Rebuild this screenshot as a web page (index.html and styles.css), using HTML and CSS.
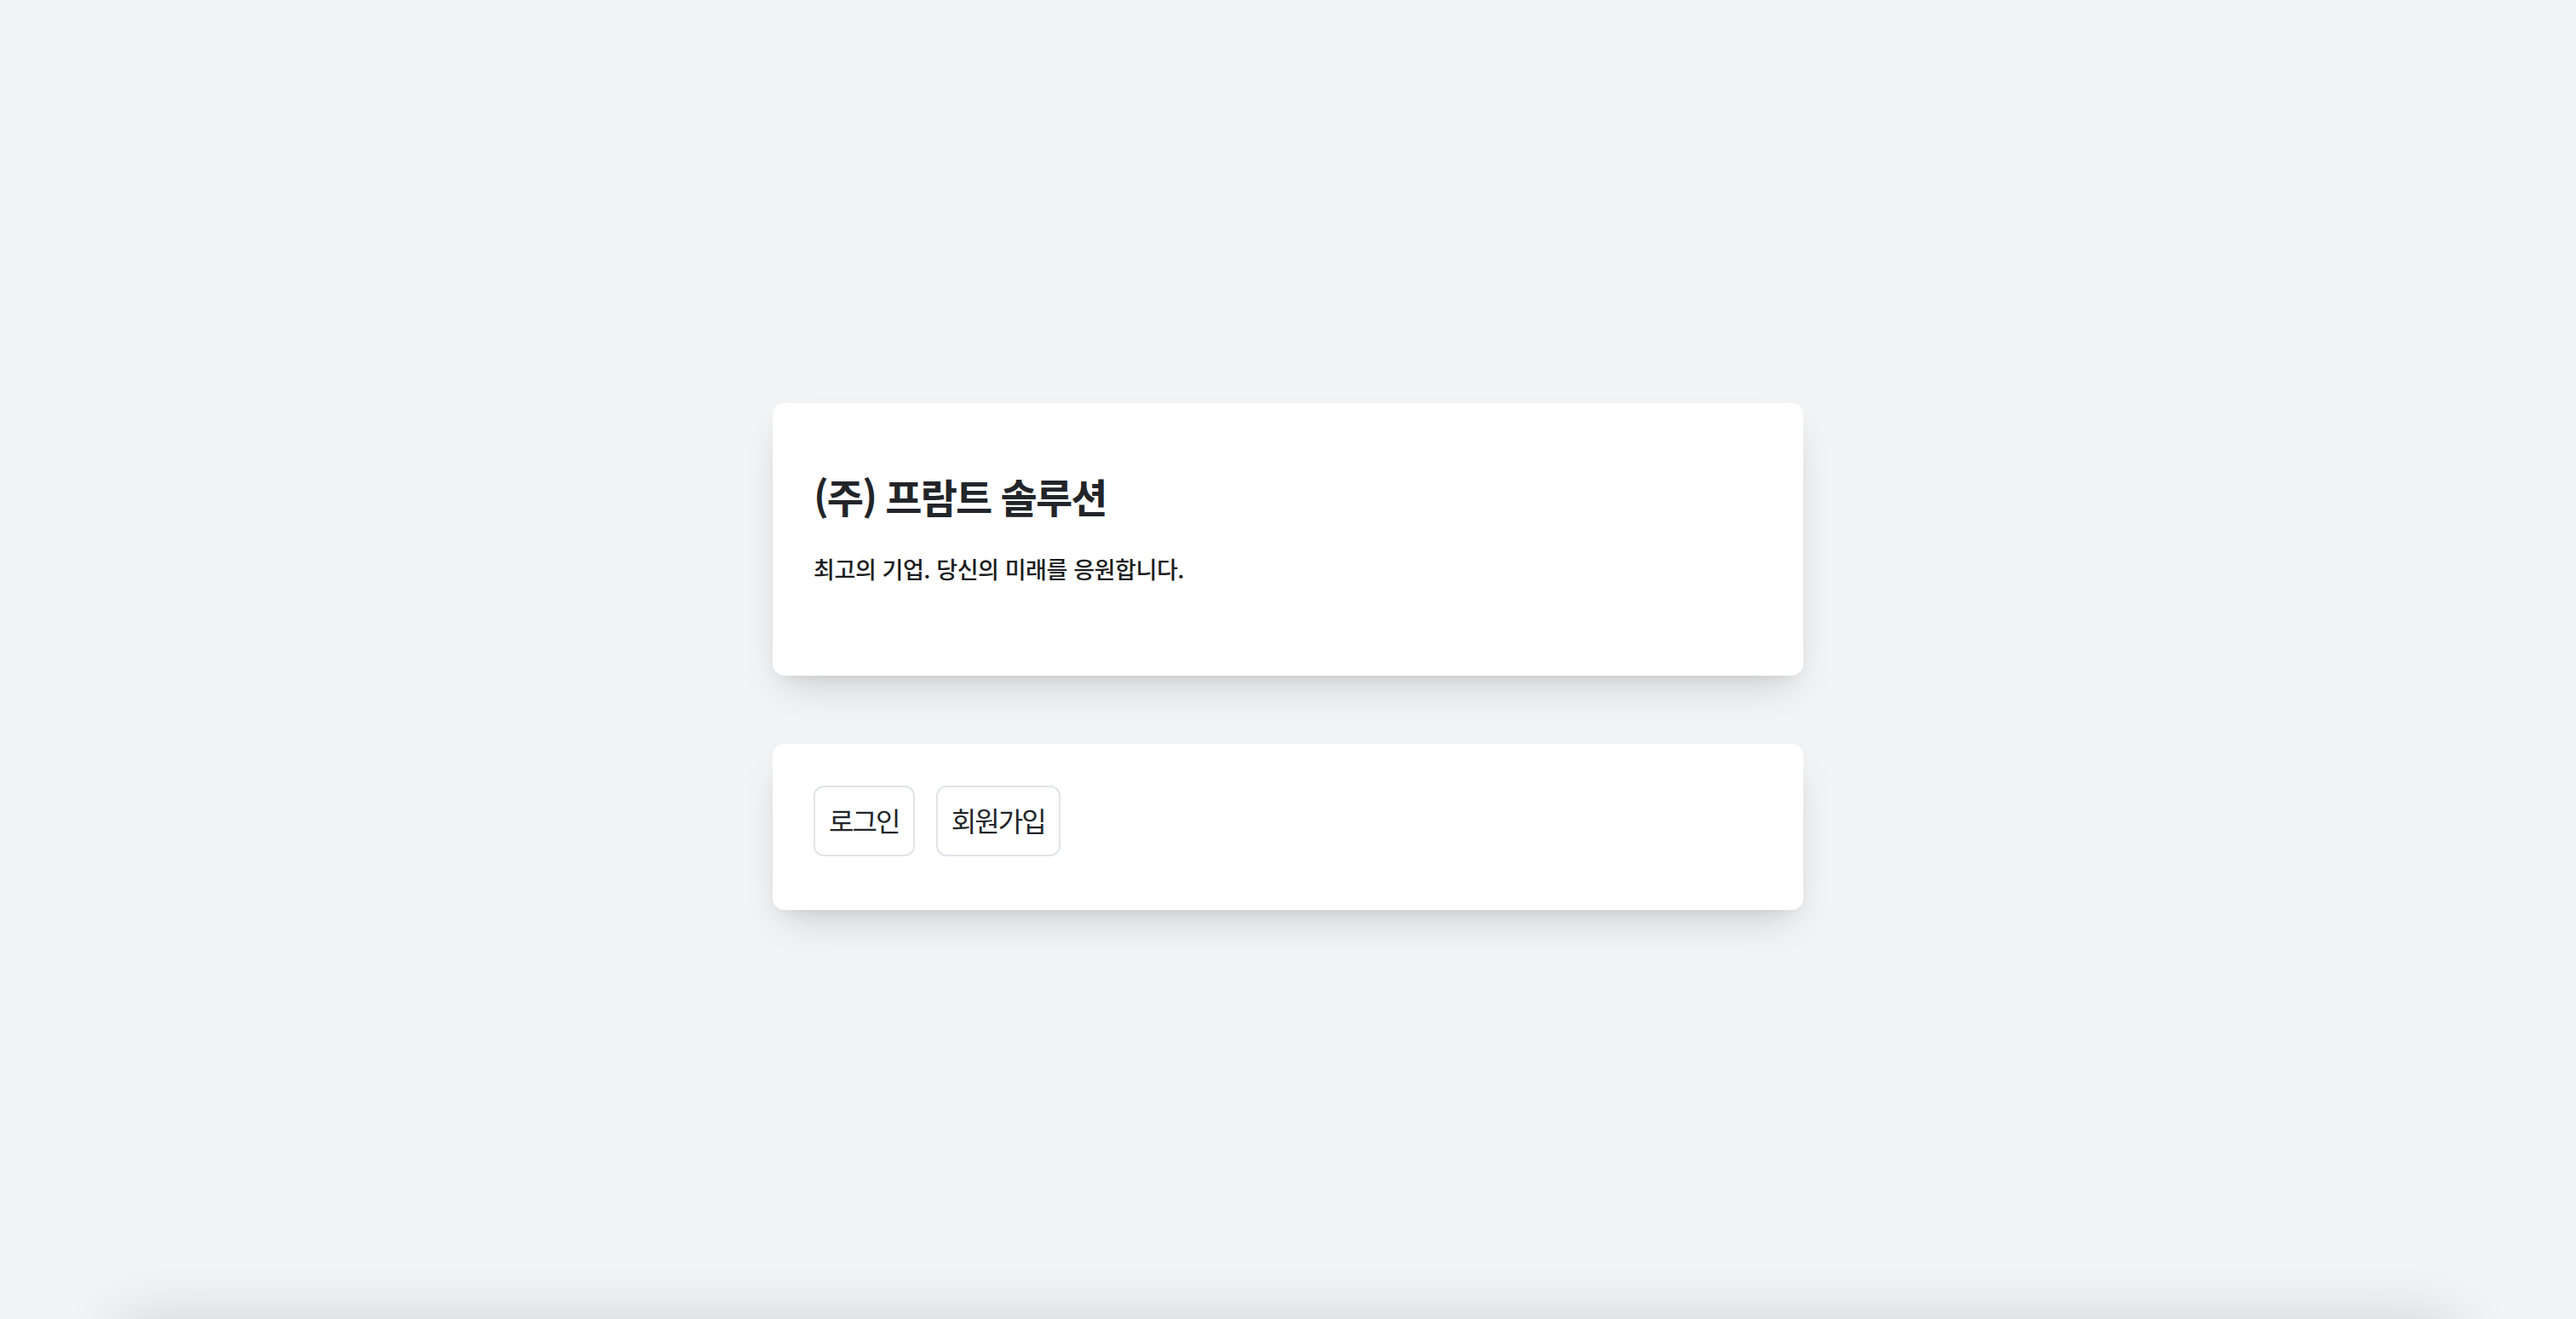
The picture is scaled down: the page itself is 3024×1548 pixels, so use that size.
FILE: index.html
```html
<!DOCTYPE html>
<html lang="ko">
<head>
    <meta charset="UTF-8">
    <title>(주) 프람트 솔루션</title>
    <meta name="viewport" content="width=device-width,initial-scale=1.0">
    <link rel="stylesheet" href="styles.css">
</head>
<body>
<div class="page">
    <main class="main">
        <section class="card card-intro">
            <h1 class="company-name">(주) 프람트 솔루션</h1>
            <p class="company-slogan">최고의 기업. 당신의 미래를 응원합니다.</p>
        </section>
        <section class="card card-actions">
            <button class="btn" type="button">로그인</button>
            <button class="btn" type="button">회원가입</button>
        </section>
    </main>
</div>
<!-- 화면 아래에 숨겨진 패널 (그림자만 보임) -->
<div class="bottom-sheet"></div>
</body>
</html>
```

FILE: styles.css
```css
html, body {
    margin: 0;
    width: 100%;
    height: 100%;
}

body {
    background-color: #f3f4f6;
    color: #23262b;
    font-family: "Noto Sans CJK KR", "Noto Sans", sans-serif;
    overflow: hidden;
}

.page {
    display: flex;
    justify-content: center;
    align-items: center;
    min-height: 100%;
    padding-bottom: 7px;
    box-sizing: border-box;
}

.main {
    display: flex;
    flex-direction: column;
    gap: 80px;
    width: 1210px;
}

/*카드*/
.card {
    background-color: #ffffff;
    border-radius: 14px;
    box-shadow: 0 22px 48px -12px rgba(0, 0, 0, 0.16), 0 8px 18px -10px rgba(0, 0, 0, 0.1);
    box-sizing: border-box;
}

.card-intro {
    height: 320px;
    padding: 77px 48px 0;
}

.company-name {
    margin: 0;
    font-size: 47px;
    line-height: 64px;
    font-weight: 600;
    letter-spacing: -1.9px;
    color: #222529;
}

.company-slogan {
    margin: 34px 0 0;
    font-size: 27px;
    line-height: 40px;
    font-weight: 500;
    letter-spacing: -0.4px;
    color: #1b1d20;
}

/*버튼 영역*/
.card-actions {
    display: flex;
    gap: 25px;
    height: 195px;
    padding: 49px 48px 0;
    align-items: flex-start;
}

.btn {
    height: 83px;
    padding: 0 16px 4px;
    border: 2px solid #e1e4e8;
    border-radius: 12px;
    background-color: #ffffff;
    color: #222529;
    font-family: inherit;
    font-size: 32px;
    line-height: 40px;
    letter-spacing: -1.9px;
    cursor: pointer;
}

.btn:focus {
    outline: none;
}

/*하단 패널*/
.bottom-sheet {
    position: fixed;
    left: 130px;
    right: 130px;
    top: 100%;
    height: 300px;
    border-radius: 40px;
    background-color: #ffffff;
    box-shadow: 0 -6px 70px rgba(0, 0, 0, 0.12);
}
```
